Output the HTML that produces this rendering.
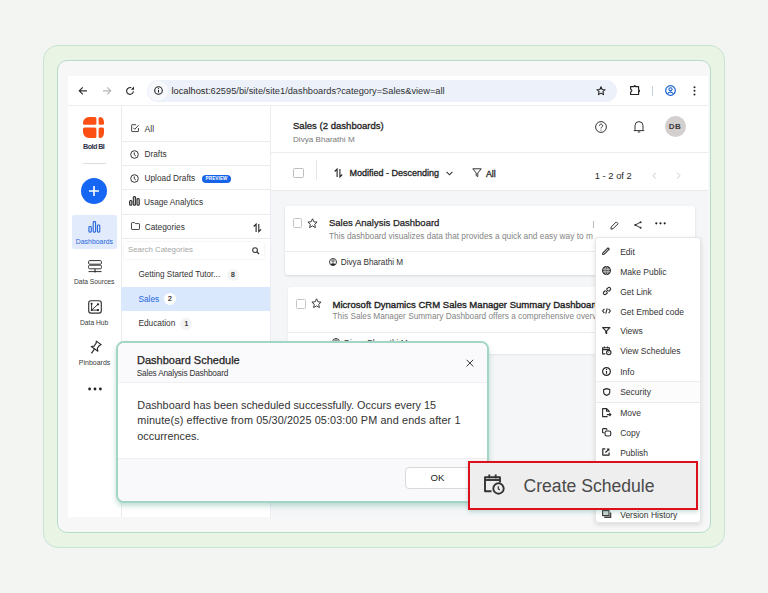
<!DOCTYPE html>
<html><head><meta charset="utf-8">
<style>
*{box-sizing:border-box;margin:0;padding:0}
html,body{width:768px;height:593px;overflow:hidden;background:#f3f5f2;font-family:"Liberation Sans",sans-serif;color:#2b2b2b;position:relative}
.a{position:absolute}
.t{position:absolute;white-space:nowrap;line-height:1}
.sep{position:absolute;height:1px;background:#ececec}
svg.i{position:absolute;overflow:visible}
</style></head><body>
<!-- frames -->
<div class="a" style="left:43px;top:45px;width:682px;height:503px;border:1px solid #c6e4d2;border-radius:15px;background:#e9f4e4"></div>
<div class="a" style="left:57px;top:60px;width:654px;height:473px;border:1px solid #b5dcca;border-radius:10px;background:#f6f7f6"></div>

<!-- browser base -->
<div class="a" style="left:68px;top:76px;width:640px;height:441px;background:#fff"></div>
<!-- toolbar -->
<div class="a" style="left:68px;top:105px;width:640px;height:1px;background:#eeeeee"></div>
<div class="a" style="left:147px;top:79.5px;width:469.5px;height:22px;border-radius:11px;background:#edf1f9"></div>
<div class="a" style="left:148px;top:80.5px;width:20px;height:20px;border-radius:10px;background:#f6f8fc"></div>
<div class="t" style="left:171.5px;top:87.2px;font-size:9.25px;color:#1f1f1f">localhost<span style="color:#2f3236">:62595/bi/site/site1/dashboards?category=Sales&amp;view=all</span></div>
<!-- back -->
<svg class="i" style="left:78px;top:86px" width="10" height="10" viewBox="0 0 10 10"><path d="M9 4.8H1.5M4.8 1.3L1.3 4.8L4.8 8.3" fill="none" stroke="#333" stroke-width="1.2"/></svg>
<svg class="i" style="left:101.5px;top:86px" width="10" height="10" viewBox="0 0 10 10"><path d="M1 4.8H8.5M5.2 1.3L8.7 4.8L5.2 8.3" fill="none" stroke="#b4b4b4" stroke-width="1.2"/></svg>
<svg class="i" style="left:125px;top:86px" width="10" height="10" viewBox="0 0 10 10"><path d="M8.4 5.2A3.4 3.4 0 1 1 6.3 1.8" fill="none" stroke="#222" stroke-width="1.1"/><path d="M5.9 3.7H9V0.6Z" fill="#222"/></svg>
<svg class="i" style="left:153.5px;top:86.3px" width="9" height="9" viewBox="0 0 9 9"><circle cx="4.5" cy="4.5" r="3.8" fill="none" stroke="#222" stroke-width="1.1"/><path d="M4.5 3.9V6.6" stroke="#222" stroke-width="1.1"/><circle cx="4.5" cy="2.6" r="0.6" fill="#222"/></svg>
<!-- star url -->
<svg class="i" style="left:596px;top:86px" width="10" height="9.5" viewBox="0 0 10 10"><path d="M5 0.8L6.2 3.6L9.3 3.9L7 6L7.7 9.1L5 7.5L2.3 9.1L3 6L0.7 3.9L3.8 3.6Z" fill="none" stroke="#222" stroke-width="1.1" stroke-linejoin="round"/></svg>
<!-- puzzle -->
<svg class="i" style="left:630px;top:84.8px" width="11" height="11" viewBox="0 0 11 11"><path d="M0.6 1.6H3.9A0.8 0.8 0 0 1 5.5 1.6H8.6V5A0.9 0.9 0 0 1 8.6 6.8V9.5H0.6V7.3L1.9 5.6L0.6 3.9Z" fill="none" stroke="#222" stroke-width="1.15" stroke-linejoin="round"/><circle cx="4.7" cy="1.1" r="0.9" fill="#222"/><circle cx="9.1" cy="5.9" r="0.9" fill="#222"/></svg>
<div class="a" style="left:652px;top:85.5px;width:1px;height:10px;background:#c7cfdc"></div>
<svg class="i" style="left:665px;top:85.2px" width="11" height="11" viewBox="0 0 11 11"><circle cx="5.5" cy="5.5" r="4.8" fill="none" stroke="#1a5fd0" stroke-width="1.2"/><circle cx="5.5" cy="4.3" r="1.6" fill="none" stroke="#1a5fd0" stroke-width="1.1"/><path d="M2.6 8.6Q5.5 5.8 8.4 8.6" fill="none" stroke="#1a5fd0" stroke-width="1.1"/></svg>
<svg class="i" style="left:693px;top:86px" width="3" height="10" viewBox="0 0 3 10"><circle cx="1.5" cy="1.2" r="1" fill="#222"/><circle cx="1.5" cy="4.8" r="1" fill="#222"/><circle cx="1.5" cy="8.4" r="1" fill="#222"/></svg>

<!-- rail -->
<div class="a" style="left:120.5px;top:106px;width:1px;height:411px;background:#ebebeb"></div>
<svg class="i" style="left:83px;top:117px" width="21" height="21" viewBox="0 0 21 21">
<path d="M0 6A6 6 0 0 1 6 0H11.9A1.5 1.5 0 0 1 13.4 1.5V6.3A1.5 1.5 0 0 1 11.9 7.8H1.5A1.5 1.5 0 0 1 0 6.3Z" fill="#fb4f14"/>
<path d="M15.6 1.5A1.5 1.5 0 0 1 17.1 0A3.9 5.2 0 0 1 21 5.2V6.3A1.5 1.5 0 0 1 19.5 7.8H17.1A1.5 1.5 0 0 1 15.6 6.3Z" fill="#fb4f14"/>
<path d="M0 11.9A1.5 1.5 0 0 1 1.5 10.4H11.9A1.5 1.5 0 0 1 13.4 11.9V19.5A1.5 1.5 0 0 1 11.9 21H6A6 6 0 0 1 0 15Z" fill="#fb4f14"/>
<path d="M15.6 11.9A1.5 1.5 0 0 1 17.1 10.4H19.5A1.5 1.5 0 0 1 21 11.9V15.8A3.9 5.2 0 0 1 17.1 21A1.5 1.5 0 0 1 15.6 19.5Z" fill="#fb4f14"/>
</svg>
<div class="t" style="left:83px;top:143px;font-size:7.2px;font-weight:700;color:#2d3149;letter-spacing:-0.55px">Bold BI</div>
<div class="a" style="left:83px;top:162.5px;width:23px;height:1px;background:#dcdcdc"></div>
<div class="a" style="left:81px;top:177.5px;width:26px;height:26px;border-radius:13px;background:#1566f2"></div>
<svg class="i" style="left:88px;top:184.5px" width="12" height="12" viewBox="0 0 12 12"><path d="M6 1V11M1 6H11" stroke="#fff" stroke-width="1.6"/></svg>
<div class="a" style="left:72px;top:215px;width:45px;height:33.7px;border-radius:2px;background:#e2ebfc"></div>
<svg class="i" style="left:88.3px;top:220.5px" width="13" height="12" viewBox="0 0 13 12"><rect x="0.9" y="5.5" width="2.4" height="5.6" rx="0.9" fill="none" stroke="#2566dc" stroke-width="1.1"/><rect x="5.2" y="0.6" width="2.4" height="10.5" rx="0.9" fill="none" stroke="#2566dc" stroke-width="1.1"/><rect x="9.4" y="4" width="2.4" height="7.1" rx="0.9" fill="none" stroke="#2566dc" stroke-width="1.1"/></svg>
<div class="t" style="left:75.8px;top:239.3px;font-size:6.9px;color:#2566dc">Dashboards</div>
<svg class="i" style="left:88px;top:259.5px" width="14" height="13" viewBox="0 0 14 13"><rect x="0.6" y="0.6" width="12.8" height="3.6" rx="1" fill="none" stroke="#333" stroke-width="1"/><rect x="0.6" y="5.2" width="12.8" height="3.6" rx="1" fill="none" stroke="#333" stroke-width="1"/><path d="M0.5 11.6H13.5M7 8.8V11.6" stroke="#333" stroke-width="1"/><circle cx="7" cy="11.6" r="1" fill="#333"/></svg>
<div class="t" style="left:73.9px;top:279.4px;font-size:6.7px;color:#3a3a3a">Data Sources</div>
<svg class="i" style="left:88px;top:299.5px" width="14" height="14" viewBox="0 0 14 14"><rect x="0.7" y="0.7" width="12.6" height="12.4" rx="2.3" fill="none" stroke="#333" stroke-width="1.15"/><path d="M3.6 3.8V10.1L10 4.3M3.6 10.1H10" fill="none" stroke="#333" stroke-width="1"/><circle cx="3.6" cy="3.8" r="1.05" fill="#222"/><circle cx="10" cy="4.3" r="1.15" fill="#222"/><circle cx="10" cy="10.1" r="1.15" fill="#222"/><circle cx="3.6" cy="10.1" r="0.9" fill="#222"/></svg>
<div class="t" style="left:80px;top:320px;font-size:6.7px;color:#3a3a3a">Data Hub</div>
<svg class="i" style="left:89.2px;top:339.6px" width="12" height="15" viewBox="-4.6 -5.8 9.2 11.5"><g transform="rotate(35) translate(0.3,-4.6)"><path d="M-2.3 0H2.3L1.5 1.3V4.1L3.1 5.6H-3.1L-1.5 4.1V1.3Z" fill="none" stroke="#2a2a2a" stroke-width="0.85" stroke-linejoin="round"/><path d="M0 5.6V9.8" stroke="#2a2a2a" stroke-width="0.9"/></g></svg>
<div class="t" style="left:78.8px;top:359px;font-size:7px;color:#3a3a3a">Pinboards</div>
<svg class="i" style="left:88px;top:387px" width="14" height="4" viewBox="0 0 14 4"><circle cx="1.6" cy="2" r="1.4" fill="#222"/><circle cx="7" cy="2" r="1.4" fill="#222"/><circle cx="12.4" cy="2" r="1.4" fill="#222"/></svg>

<!-- categories panel -->
<div class="a" style="left:269.5px;top:106px;width:1.5px;height:411px;background:#e9edf2"></div>
<div class="sep" style="left:121px;top:141px;width:148.5px"></div>
<div class="sep" style="left:121px;top:165px;width:148.5px"></div>
<div class="sep" style="left:121px;top:189px;width:148.5px"></div>
<div class="sep" style="left:121px;top:213.5px;width:148.5px"></div>
<div class="sep" style="left:121px;top:237.5px;width:148.5px"></div>
<svg class="i" style="left:130.6px;top:124.2px" width="8.2" height="8.2" viewBox="0 0 9 9"><path d="M5.6 0.8H1.2A0.5 0.5 0 0 0 0.7 1.3V7.8A0.5 0.5 0 0 0 1.2 8.3H7.7A0.5 0.5 0 0 0 8.2 7.8V4.4" fill="none" stroke="#333" stroke-width="1"/><path d="M2.6 4.2L4.2 5.8L8.4 1.2" fill="none" stroke="#333" stroke-width="1"/></svg>
<div class="t" style="left:144.5px;top:125.2px;font-size:8.6px;color:#333">All</div>
<svg class="i" style="left:130px;top:149.6px" width="9" height="9" viewBox="0 0 9 9"><circle cx="4.5" cy="4.5" r="3.8" fill="none" stroke="#333" stroke-width="1"/><path d="M4.3 2.4V4.8L5.8 6" fill="none" stroke="#333" stroke-width="1"/></svg>
<div class="t" style="left:144.5px;top:150px;font-size:8.3px;color:#333">Drafts</div>
<svg class="i" style="left:130px;top:173.8px" width="9" height="9" viewBox="0 0 9 9"><circle cx="4.5" cy="4.5" r="3.8" fill="none" stroke="#333" stroke-width="1"/><path d="M4.3 2.4V4.8L5.8 6" fill="none" stroke="#333" stroke-width="1"/></svg>
<div class="t" style="left:144.5px;top:174.2px;font-size:8.3px;color:#333">Upload Drafts</div>
<div class="a" style="left:202.4px;top:175.4px;width:28.6px;height:7.6px;border-radius:4px;background:#1763e8"></div>
<div class="t" style="left:205.6px;top:177px;font-size:4.6px;font-weight:700;color:#fff;letter-spacing:0.1px">PREVIEW</div>
<svg class="i" style="left:129px;top:196px" width="11" height="10" viewBox="0 0 11 10"><rect x="0.6" y="4.4" width="2.3" height="4.9" rx="1" fill="#c8c8c8" stroke="#2a2a2a" stroke-width="1.05"/><rect x="4.3" y="0.6" width="2.3" height="8.7" rx="1" fill="#c8c8c8" stroke="#2a2a2a" stroke-width="1.05"/><rect x="8" y="2.4" width="2.3" height="6.9" rx="1" fill="#c8c8c8" stroke="#2a2a2a" stroke-width="1.05"/></svg>
<div class="t" style="left:144px;top:198.2px;font-size:8.3px;color:#333">Usage Analytics</div>
<svg class="i" style="left:131px;top:221.5px" width="9" height="8" viewBox="0 0 9 8"><path d="M0.5 1.2A0.6 0.6 0 0 1 1.1 0.6H3.4L4.4 1.6H7.9A0.6 0.6 0 0 1 8.5 2.2V6.9A0.6 0.6 0 0 1 7.9 7.5H1.1A0.6 0.6 0 0 1 0.5 6.9Z" fill="none" stroke="#333" stroke-width="0.9"/></svg>
<div class="t" style="left:144.7px;top:222.5px;font-size:8.3px;color:#333">Categories</div>
<svg class="i" style="left:252.5px;top:223px" width="9" height="10" viewBox="0 0 9 10"><path d="M3.1 9V1.1L0.7 3.5M5.8 1V8.7L8.1 6.3" fill="none" stroke="#222" stroke-width="1.1"/></svg>
<div class="a" style="left:124px;top:242px;width:140px;height:17px;border-radius:2px;background:#fff;box-shadow:0 0 2px rgba(0,0,0,0.12)"></div>
<div class="t" style="left:128px;top:246.2px;font-size:7.85px;color:#a6a6a6">Search Categories</div>
<svg class="i" style="left:252px;top:246.6px" width="7.6" height="7.6" viewBox="0 0 8 8"><circle cx="3.2" cy="3.2" r="2.5" fill="none" stroke="#333" stroke-width="1.1"/><path d="M5 5L7.4 7.4" stroke="#333" stroke-width="1.2"/></svg>
<div class="t" style="left:138.4px;top:271px;font-size:8.15px;color:#333">Getting Started Tutor...</div>
<div class="a" style="left:227px;top:269.3px;width:12px;height:12px;border-radius:6px;background:#f4f4f4"></div>
<div class="t" style="left:231px;top:272.3px;font-size:6.8px;color:#222;-webkit-text-stroke:0.2px #222">8</div>
<div class="a" style="left:121px;top:286.7px;width:148.5px;height:24.3px;background:#dae8fe"></div>
<div class="t" style="left:138.4px;top:294.6px;font-size:8.3px;color:#2566dc">Sales</div>
<div class="a" style="left:164px;top:292.7px;width:12px;height:12px;border-radius:6px;background:#fff"></div>
<div class="t" style="left:168px;top:296px;font-size:6.8px;color:#222;-webkit-text-stroke:0.2px #222">2</div>
<div class="t" style="left:138.4px;top:319px;font-size:8.3px;color:#333">Education</div>
<div class="a" style="left:180.3px;top:317.8px;width:12px;height:12px;border-radius:6px;background:#f4f4f4"></div>
<div class="t" style="left:184.4px;top:320.8px;font-size:6.8px;color:#222;-webkit-text-stroke:0.2px #222">1</div>

<!-- main area -->
<div class="a" style="left:271px;top:190px;width:437px;height:327px;background:#f4f6f8"></div>
<div class="a" style="left:271px;top:152px;width:437px;height:1px;background:#ececec"></div>
<div class="a" style="left:271px;top:189.5px;width:437px;height:1px;background:#e9ecef"></div>
<div class="t" style="left:293px;top:120.5px;font-size:9.55px;color:#222;-webkit-text-stroke:0.3px #222">Sales (2 dashboards)</div>
<div class="t" style="left:293px;top:136px;font-size:8.1px;color:#777">Divya Bharathi M</div>
<svg class="i" style="left:595px;top:120.5px" width="12" height="12" viewBox="0 0 12 12"><circle cx="6" cy="6" r="5.4" fill="none" stroke="#333" stroke-width="1"/><path d="M4.4 4.7A1.6 1.6 0 1 1 6.8 6.1C6.2 6.4 6 6.8 6 7.4" fill="none" stroke="#333" stroke-width="1"/><circle cx="6" cy="9" r="0.6" fill="#333"/></svg>
<svg class="i" style="left:633px;top:120px" width="12" height="13" viewBox="0 0 12 13"><path d="M2 9.6V5.6A4 4 0 0 1 10 5.6V9.6L11 10.6H1Z" fill="none" stroke="#333" stroke-width="1" stroke-linejoin="round"/><path d="M4.8 12H7.2" stroke="#333" stroke-width="1"/></svg>
<div class="a" style="left:665px;top:116px;width:21px;height:21px;border-radius:10.5px;background:#d3cfcf"></div>
<div class="t" style="left:668.8px;top:123.3px;font-size:8px;font-weight:700;color:#3a3a3a;letter-spacing:0.4px">DB</div>
<!-- toolbar -->
<div class="a" style="left:293px;top:167.8px;width:10.5px;height:10.5px;border:1px solid #bdbdbd;border-radius:1.5px"></div>
<div class="a" style="left:316px;top:160px;width:1px;height:20px;background:#e6e6e6"></div>
<svg class="i" style="left:333.6px;top:168px" width="9" height="10" viewBox="0 0 9 10"><path d="M3.1 9V1.1L0.7 3.5M5.9 1V8.9L8.2 6.5" fill="none" stroke="#222" stroke-width="1.1"/></svg>
<div class="t" style="left:349.4px;top:169px;font-size:9px;color:#222;-webkit-text-stroke:0.3px #222">Modified - Descending</div>
<svg class="i" style="left:445.5px;top:171px" width="7" height="5" viewBox="0 0 7 5"><path d="M0.6 0.8L3.5 3.8L6.4 0.8" fill="none" stroke="#333" stroke-width="1.1"/></svg>
<svg class="i" style="left:472px;top:168px" width="10" height="10" viewBox="0 0 10 10"><path d="M0.8 0.8H9.2L5.8 5V8.6L4.2 7.6V5Z" fill="none" stroke="#333" stroke-width="1" stroke-linejoin="round"/></svg>
<div class="t" style="left:486px;top:169.6px;font-size:8.8px;color:#222;-webkit-text-stroke:0.3px #222">All</div>
<div class="t" style="left:594.8px;top:171.4px;font-size:9.4px;color:#2b2b2b">1 - 2 of 2</div>
<svg class="i" style="left:651.8px;top:171.8px" width="5" height="7.4" viewBox="0 0 5 8"><path d="M4 0.8L1 4L4 7.2" fill="none" stroke="#c4c4c4" stroke-width="1"/></svg>
<svg class="i" style="left:676px;top:171.8px" width="5" height="7.4" viewBox="0 0 5 8"><path d="M1 0.8L4 4L1 7.2" fill="none" stroke="#c4c4c4" stroke-width="1"/></svg>

<!-- card 1 -->
<div class="a" style="left:285px;top:206px;width:409.5px;height:69px;background:#fff;border-radius:3px;box-shadow:0 1px 2.5px rgba(0,0,0,0.13)"></div>
<div class="a" style="left:285px;top:250.5px;width:409.5px;height:1px;background:#ececec"></div>
<div class="a" style="left:292.7px;top:218.4px;width:9.6px;height:9.6px;border:1px solid #c4c4c4;border-radius:1.5px"></div>
<svg class="i" style="left:307.3px;top:217.8px" width="11" height="11" viewBox="0 0 11 11"><path d="M5.5 0.8L6.9 3.8L10.1 4.1L7.7 6.3L8.4 9.6L5.5 7.9L2.6 9.6L3.3 6.3L0.9 4.1L4.1 3.8Z" fill="none" stroke="#333" stroke-width="0.95" stroke-linejoin="round"/></svg>
<div class="t" style="left:329px;top:218px;font-size:9.5px;color:#222;-webkit-text-stroke:0.25px #222">Sales Analysis Dashboard</div>
<div class="t" style="left:329px;top:231.8px;font-size:8.3px;color:#858585">This dashboard visualizes data that provides a quick and easy way to monitor</div>
<div class="a" style="left:592.5px;top:210px;width:102px;height:38px;background:#fff"></div>
<div class="a" style="left:593.2px;top:221px;width:0.8px;height:6.5px;background:#bbb"></div>
<svg class="i" style="left:609.5px;top:220.8px" width="9" height="9" viewBox="0 0 9 9"><path d="M6.3 0.9L8.1 2.7L3 7.8L0.9 8.1L1.2 6Z" fill="none" stroke="#333" stroke-width="1" stroke-linejoin="round"/></svg>
<svg class="i" style="left:633.5px;top:220.8px" width="8" height="8" viewBox="0 0 8 8"><path d="M6.6 1.2L1.2 4L6.6 6.8" fill="none" stroke="#333" stroke-width="1"/><circle cx="6.6" cy="1.2" r="1" fill="#333"/><circle cx="1.2" cy="4" r="1" fill="#333"/><circle cx="6.6" cy="6.8" r="1" fill="#333"/></svg>
<svg class="i" style="left:655px;top:221.8px" width="11" height="3" viewBox="0 0 11 3"><circle cx="1.3" cy="1.3" r="1.1" fill="#222"/><circle cx="5.5" cy="1.3" r="1.1" fill="#222"/><circle cx="9.7" cy="1.3" r="1.1" fill="#222"/></svg>
<svg class="i" style="left:328.6px;top:257.9px" width="8" height="8" viewBox="0 0 8 8"><circle cx="4" cy="4" r="3.5" fill="none" stroke="#333" stroke-width="0.95"/><circle cx="4" cy="3" r="1.2" fill="none" stroke="#333" stroke-width="0.8"/><path d="M1.4 6.3Q4 4.1 6.6 6.3A3.5 3.5 0 0 1 1.4 6.3Z" fill="#222"/></svg>
<div class="t" style="left:340.8px;top:258.8px;font-size:8.2px;color:#333">Divya Bharathi M</div>

<!-- card 2 -->
<div class="a" style="left:288px;top:286.7px;width:406.5px;height:67.5px;background:#fff;border-radius:3px;box-shadow:0 1px 2.5px rgba(0,0,0,0.07)"></div>
<div class="a" style="left:288px;top:331.8px;width:406.5px;height:1px;background:#ececec"></div>
<div class="a" style="left:296.3px;top:299px;width:9.3px;height:9.5px;border:1px solid #c4c4c4;border-radius:1.5px"></div>
<svg class="i" style="left:310.6px;top:298.4px" width="11" height="11" viewBox="0 0 11 11"><path d="M5.5 0.8L6.9 3.8L10.1 4.1L7.7 6.3L8.4 9.6L5.5 7.9L2.6 9.6L3.3 6.3L0.9 4.1L4.1 3.8Z" fill="none" stroke="#333" stroke-width="0.95" stroke-linejoin="round"/></svg>
<div class="t" style="left:332.5px;top:299.5px;font-size:9.55px;color:#222;-webkit-text-stroke:0.35px #222">Microsoft Dynamics CRM Sales Manager Summary Dashboard</div>
<div class="t" style="left:332.5px;top:313.3px;font-size:8.25px;color:#858585">This Sales Manager Summary Dashboard offers a comprehensive overview</div>
<svg class="i" style="left:332px;top:338px" width="8" height="8" viewBox="0 0 8 8"><circle cx="4" cy="4" r="3.5" fill="none" stroke="#333" stroke-width="0.95"/><circle cx="4" cy="3" r="1.2" fill="none" stroke="#333" stroke-width="0.8"/><path d="M1.4 6.3Q4 4.1 6.6 6.3A3.5 3.5 0 0 1 1.4 6.3Z" fill="#222"/></svg>
<div class="t" style="left:344px;top:338.5px;font-size:8.4px;color:#333">Divya Bharathi M</div>

<!-- menu -->
<div class="a" style="left:594.5px;top:236.7px;width:106px;height:286px;background:#fff;border:1px solid #e6e6e6;border-radius:3px;box-shadow:0 2px 5px rgba(0,0,0,0.12)"></div>
<div class="a" style="left:595.5px;top:380.8px;width:104px;height:22px;background:#fcfcfc;border-top:1px solid #eeeeee;border-bottom:1px solid #e9e9e9"></div>
<div class="t" style="left:620.2px;top:247.8px;font-size:8.5px;color:#333">Edit</div>
<div class="t" style="left:620.2px;top:267.5px;font-size:8.5px;color:#333">Make Public</div>
<div class="t" style="left:620.2px;top:287.6px;font-size:8.5px;color:#333">Get Link</div>
<div class="t" style="left:620.2px;top:307.6px;font-size:8.5px;color:#333">Get Embed code</div>
<div class="t" style="left:620.2px;top:327.3px;font-size:8.5px;color:#333">Views</div>
<div class="t" style="left:620.2px;top:347.4px;font-size:8.5px;color:#333">View Schedules</div>
<div class="t" style="left:620.2px;top:367.6px;font-size:8.5px;color:#333">Info</div>
<div class="t" style="left:620.2px;top:388.3px;font-size:8.5px;color:#333">Security</div>
<div class="t" style="left:620.2px;top:409.2px;font-size:8.5px;color:#333">Move</div>
<div class="t" style="left:620.2px;top:429.3px;font-size:8.5px;color:#333">Copy</div>
<div class="t" style="left:620.2px;top:449.2px;font-size:8.5px;color:#333">Publish</div>
<div class="t" style="left:620.2px;top:510.6px;font-size:8.5px;color:#333">Version History</div>

<svg class="i" style="left:602px;top:246.8px" width="8" height="8" viewBox="0 0 8 8"><path d="M6 0.8L7.3 2.1L2.2 7.2L0.6 7.5L0.9 5.9Z" stroke="#2a2a2a" stroke-width="1.1" fill="none" stroke-linejoin="round"/></svg>
<svg class="i" style="left:601.7px;top:266.2px" width="9" height="9" viewBox="0 0 9 9"><circle cx="4.5" cy="4.5" r="3.9" fill="#555" stroke="#2a2a2a" stroke-width="1.1"/><path d="M0.9 3.2H8.1M0.9 5.8H8.1" stroke="#ddd" stroke-width="0.8"/><ellipse cx="4.5" cy="4.5" rx="1.6" ry="3.8" fill="none" stroke="#ccc" stroke-width="0.7"/></svg>
<svg class="i" style="left:601.5px;top:285.7px" width="10" height="10" viewBox="0 0 10 10"><path d="M4.3 3.5L6 1.8A1.5 1.5 0 0 1 8.2 4L6.5 5.7M5.7 6.5L4 8.2A1.5 1.5 0 0 1 1.8 6L3.5 4.3M3.8 6.2L6.2 3.8" stroke="#2a2a2a" stroke-width="1.1" fill="none" stroke-linejoin="round"/></svg>
<svg class="i" style="left:602px;top:308.2px" width="9" height="6" viewBox="0 0 9 6"><path d="M2.4 0.8L0.6 3L2.4 5.2M6.6 0.8L8.4 3L6.6 5.2M5.2 0.3L3.8 5.7" stroke="#2a2a2a" stroke-width="1.1" fill="none" stroke-linejoin="round"/></svg>
<svg class="i" style="left:601.8px;top:327.4px" width="8.5" height="7.2" viewBox="0 0 8.5 7.2"><path d="M0.6 0.6H7.9L4.7 3.9V6.6L3.8 6V3.9Z" stroke="#2a2a2a" stroke-width="1.1" fill="none" stroke-linejoin="round"/></svg>
<svg class="i" style="left:601.8px;top:345.6px" width="9.6" height="9.2" viewBox="0 0 9.6 9.2"><path d="M3.4 7.9H0.6V1.8H7.4V3.8" stroke="#2a2a2a" stroke-width="1.1" fill="none" stroke-linejoin="round"/><path d="M0.6 3.6H7.4M2.4 0.4V2.2M5.6 0.4V2.2" stroke="#2a2a2a" stroke-width="1.1" fill="none" stroke-linejoin="round"/><circle cx="6.8" cy="6.6" r="2.2" fill="#fff" stroke="#2a2a2a" stroke-width="1.1"/><path d="M6.7 5.6V6.7L7.3 7.1" stroke="#2a2a2a" stroke-width="0.6" fill="none"/></svg>
<svg class="i" style="left:601.5px;top:366.6px" width="9" height="9" viewBox="0 0 9 9"><circle cx="4.5" cy="4.5" r="3.9" fill="none" stroke="#2a2a2a" stroke-width="1.2"/><path d="M4.5 4V6.8" stroke="#2a2a2a" stroke-width="1.2"/><circle cx="4.5" cy="2.5" r="0.7" fill="#2a2a2a"/></svg>
<svg class="i" style="left:602.5px;top:387.8px" width="7.4" height="8" viewBox="0 0 7.4 8"><path d="M3.7 0.6L6.8 1.6V4Q6.8 6.5 3.7 7.4Q0.6 6.5 0.6 4V1.6Z" stroke="#2a2a2a" stroke-width="1.1" fill="none" stroke-linejoin="round"/></svg>
<svg class="i" style="left:601.5px;top:407.6px" width="10" height="9.2" viewBox="0 0 10 9.2"><path d="M5.6 8.6H0.6V0.6H4.6L7.2 3.2V4.2M4.5 0.6V3.2H7.2" stroke="#2a2a2a" stroke-width="1.1" fill="none" stroke-linejoin="round"/><path d="M4.8 6.6H8.9M7.4 5.1L8.9 6.6L7.4 8.1" stroke="#2a2a2a" stroke-width="1.1" fill="none" stroke-linejoin="round"/></svg>
<svg class="i" style="left:601.8px;top:427.8px" width="9.4" height="8.6" viewBox="0 0 9.4 8.6"><path d="M2.3 4.8H1.2A0.6 0.6 0 0 1 0.6 4.2V1.2A0.6 0.6 0 0 1 1.2 0.6H4.2A0.6 0.6 0 0 1 4.8 1.2V2.3" stroke="#2a2a2a" stroke-width="1.1" fill="none" stroke-linejoin="round"/><rect x="3" y="3" width="5.8" height="5" rx="1.8" stroke="#2a2a2a" stroke-width="1.1" fill="none" stroke-linejoin="round"/></svg>
<svg class="i" style="left:602.3px;top:448px" width="8" height="8" viewBox="0 0 8 8"><path d="M3.3 0.8H0.8V7.1H7.1V4.6" fill="none" stroke="#222" stroke-width="1.15" stroke-linejoin="round"/><path d="M3.4 4.5L6.6 1.4" fill="none" stroke="#222" stroke-width="1.2"/><path d="M4.6 0.6H7.4V3.4Z" fill="#222"/></svg>
<svg class="i" style="left:601.5px;top:510px" width="9.5" height="8" viewBox="0 0 9.5 8"><rect x="0.6" y="0.6" width="6.4" height="5" fill="#cfd8d6" stroke="#333" stroke-width="1.1"/><path d="M2.2 7.2H8.6V2.6" fill="none" stroke="#444" stroke-width="1.4"/></svg>


<!-- dialog -->
<div class="a" style="left:116px;top:341.2px;width:372.5px;height:162px;border:2.5px solid #a3d5c4;border-radius:8px;background:#fff;box-shadow:0 3px 5px rgba(80,160,135,0.35);overflow:hidden">
  <div class="a" style="left:0;top:0;width:100%;height:39.5px;background:#faf9fb;border-bottom:1px solid #f1eff2"></div>
  <div class="a" style="left:0;top:115px;width:100%;height:46px;background:#f9f8fa;border-top:1px solid #f1eff2"></div>
</div>
<div class="t" style="left:137px;top:355.3px;font-size:11px;color:#222;-webkit-text-stroke:0.25px #222">Dashboard Schedule</div>
<div class="t" style="left:136.8px;top:370.4px;font-size:8.25px;color:#333;letter-spacing:-0.19px">Sales Analysis Dashboard</div>
<svg class="i" style="left:465.5px;top:359.3px" width="8" height="8" viewBox="0 0 8 8"><path d="M0.6 0.8L7.2 7.4M7.2 0.8L0.6 7.4" stroke="#2a2a2a" stroke-width="0.95"/></svg>
<div class="t" style="left:137.3px;top:398px;font-size:10.85px;color:#333;line-height:15.4px;white-space:normal;width:340px">Dashboard has been scheduled successfully. Occurs every 15<br><span style="letter-spacing:0.11px">minute(s) effective from 05/30/2025 05:03:00 PM and ends after 1</span><br>occurrences.</div>
<div class="a" style="left:405.3px;top:467px;width:70px;height:22px;border:1px solid #d9d9d9;border-radius:4px;background:#fff"></div>
<div class="t" style="left:430.5px;top:473.3px;font-size:9.6px;color:#222">OK</div>

<!-- red highlight -->
<div class="a" style="left:468px;top:461.2px;width:230px;height:49px;border:2.6px solid #dc0f1a;background:#eeeeee;box-shadow:0 2px 4px rgba(80,150,130,0.3)"></div>
<svg class="i" style="left:483.5px;top:473.5px" width="21" height="21" viewBox="0 0 21 21"><path d="M7.5 17.3H1V3.2H16V8.5" fill="none" stroke="#333" stroke-width="1.9" stroke-linejoin="round"/><path d="M1 6H16" stroke="#333" stroke-width="1.9"/><path d="M5.3 0.6V4.2M11.7 0.6V4.2" stroke="#333" stroke-width="1.9"/><circle cx="14.5" cy="14.5" r="5.2" fill="#eeeeee" stroke="#333" stroke-width="1.9"/><path d="M14.3 12.2V14.8L15.8 16" fill="none" stroke="#333" stroke-width="1.2"/></svg>
<div class="t" style="left:523.5px;top:478.3px;font-size:17.6px;color:#4a4a4a">Create Schedule</div>
</body></html>
